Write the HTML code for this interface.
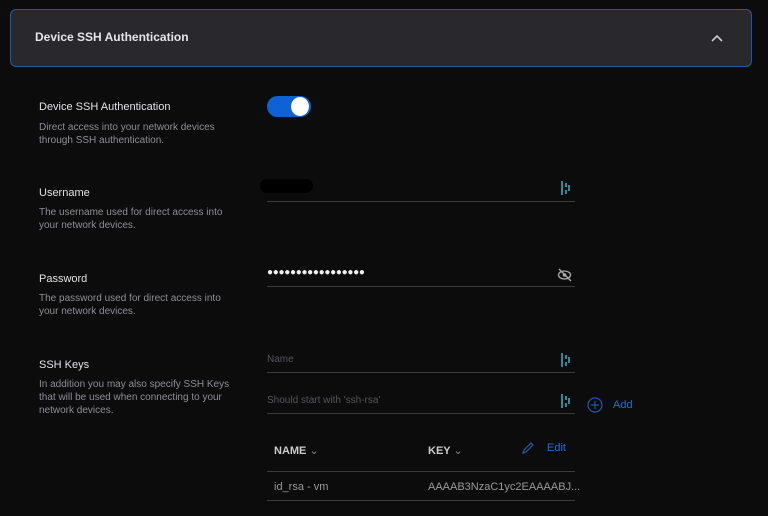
<!DOCTYPE html>
<html><head><style>
body{margin:0;width:768px;height:516px;background:#0c0c0d;font-family:"Liberation Sans",sans-serif;position:relative;overflow:hidden}
.a{position:absolute}
.hdr{left:10px;top:9px;width:742px;height:58px;background:#28282d;border:1px solid #1f5aa8;border-radius:6px;box-sizing:border-box}
.t{color:#e3e3e6;font-size:11px}
.d{color:#8e8e95;font-size:10px;line-height:13px}
.line{height:1px;background:#3a3a3f;left:267px;width:308px}
.ph{color:#55555b;font-size:10px}
.bl{color:#1f6fd6;font-size:11px}
</style></head><body>
<div class="a hdr"></div>
<div class="a" style="left:35px;top:30px;color:#e6e6ea;font-size:12px;font-weight:bold">Device SSH Authentication</div>
<svg class="a" style="left:710px;top:33px" width="14" height="10"><path d="M2 8 L7 3 L12 8" stroke="#ccc" stroke-width="1.6" fill="none"/></svg>

<div class="a t" style="left:39px;top:101px">Device SSH Authentication</div>
<div class="a d" style="left:39px;top:121px">Direct access into your network devices<br>through SSH authentication.</div>
<div class="a" style="left:267px;top:96px;width:44px;height:21px;border-radius:11px;background:#0e62d6"></div>
<div class="a" style="left:291px;top:97px;width:18px;height:19px;border-radius:50%;background:#fff"></div>

<div class="a t" style="left:39px;top:187px">Username</div>
<div class="a d" style="left:39px;top:206px">The username used for direct access into<br>your network devices.</div>
<div class="a" style="left:260px;top:179px;width:53px;height:14px;border-radius:7px;background:#000"></div>
<div class="a line" style="top:201px"></div>

<div class="a t" style="left:39px;top:273px">Password</div>
<div class="a d" style="left:39px;top:292px">The password used for direct access into<br>your network devices.</div>
<div class="a" style="left:267px;top:267px;color:#eee;font-size:10px;letter-spacing:-0.3px">●●●●●●●●●●●●●●●●●</div>
<svg class="a" style="left:557px;top:268px" width="16" height="14"><ellipse cx="7.5" cy="7" rx="6" ry="4" stroke="#aaa" fill="none" stroke-width="1.3"/><circle cx="7.5" cy="7" r="1.8" fill="#aaa"/><path d="M2 1 L14 13" stroke="#aaa" stroke-width="1.3"/></svg>
<div class="a line" style="top:286px"></div>

<div class="a t" style="left:39px;top:359px">SSH Keys</div>
<div class="a d" style="left:39px;top:378px">In addition you may also specify SSH Keys<br>that will be used when connecting to your<br>network devices.</div>
<div class="a ph" style="left:267px;top:354px">Name</div>
<div class="a line" style="top:372px"></div>
<div class="a ph" style="left:267px;top:395px">Should start with 'ssh-rsa'</div>
<div class="a line" style="top:413px"></div>
<svg class="a" style="left:587px;top:397px" width="16" height="16"><circle cx="8" cy="8" r="7" stroke="#1f5aa8" fill="none" stroke-width="1.2"/><path d="M8 4V12M4 8H12" stroke="#1f5aa8" stroke-width="1.2"/></svg>
<div class="a bl" style="left:613px;top:399px">Add</div>

<svg class="a" style="left:560px;top:180px" width="12" height="16"><path d="M2 1V15M6 3V7M6 10V14M9 5V11" stroke="#2a8aa0" stroke-width="2"/></svg>
<svg class="a" style="left:560px;top:352px" width="12" height="16"><path d="M2 1V15M6 3V7M6 10V14M9 5V11" stroke="#2a8aa0" stroke-width="2"/></svg>
<svg class="a" style="left:560px;top:393px" width="12" height="16"><path d="M2 1V15M6 3V7M6 10V14M9 5V11" stroke="#2a8aa0" stroke-width="2"/></svg>

<div class="a" style="left:274px;top:444px;color:#ccc;font-size:11px;font-weight:bold">NAME <span style="font-weight:normal;color:#888">⌄</span></div>
<div class="a" style="left:428px;top:444px;color:#ccc;font-size:11px;font-weight:bold">KEY <span style="font-weight:normal;color:#888">⌄</span></div>
<svg class="a" style="left:521px;top:441px" width="14" height="14"><path d="M2 12 L3 9 L10 2 L12 4 L5 11 Z" stroke="#1f5aa8" fill="none" stroke-width="1.2"/></svg>
<div class="a bl" style="left:547px;top:442px">Edit</div>
<div class="a line" style="top:471px"></div>
<div class="a" style="left:274px;top:481px;color:#999;font-size:11px">id_rsa - vm</div>
<div class="a" style="left:428px;top:481px;color:#999;font-size:11px">AAAAB3NzaC1yc2EAAAABJ...</div>
<div class="a line" style="top:500px"></div>
</body></html>
